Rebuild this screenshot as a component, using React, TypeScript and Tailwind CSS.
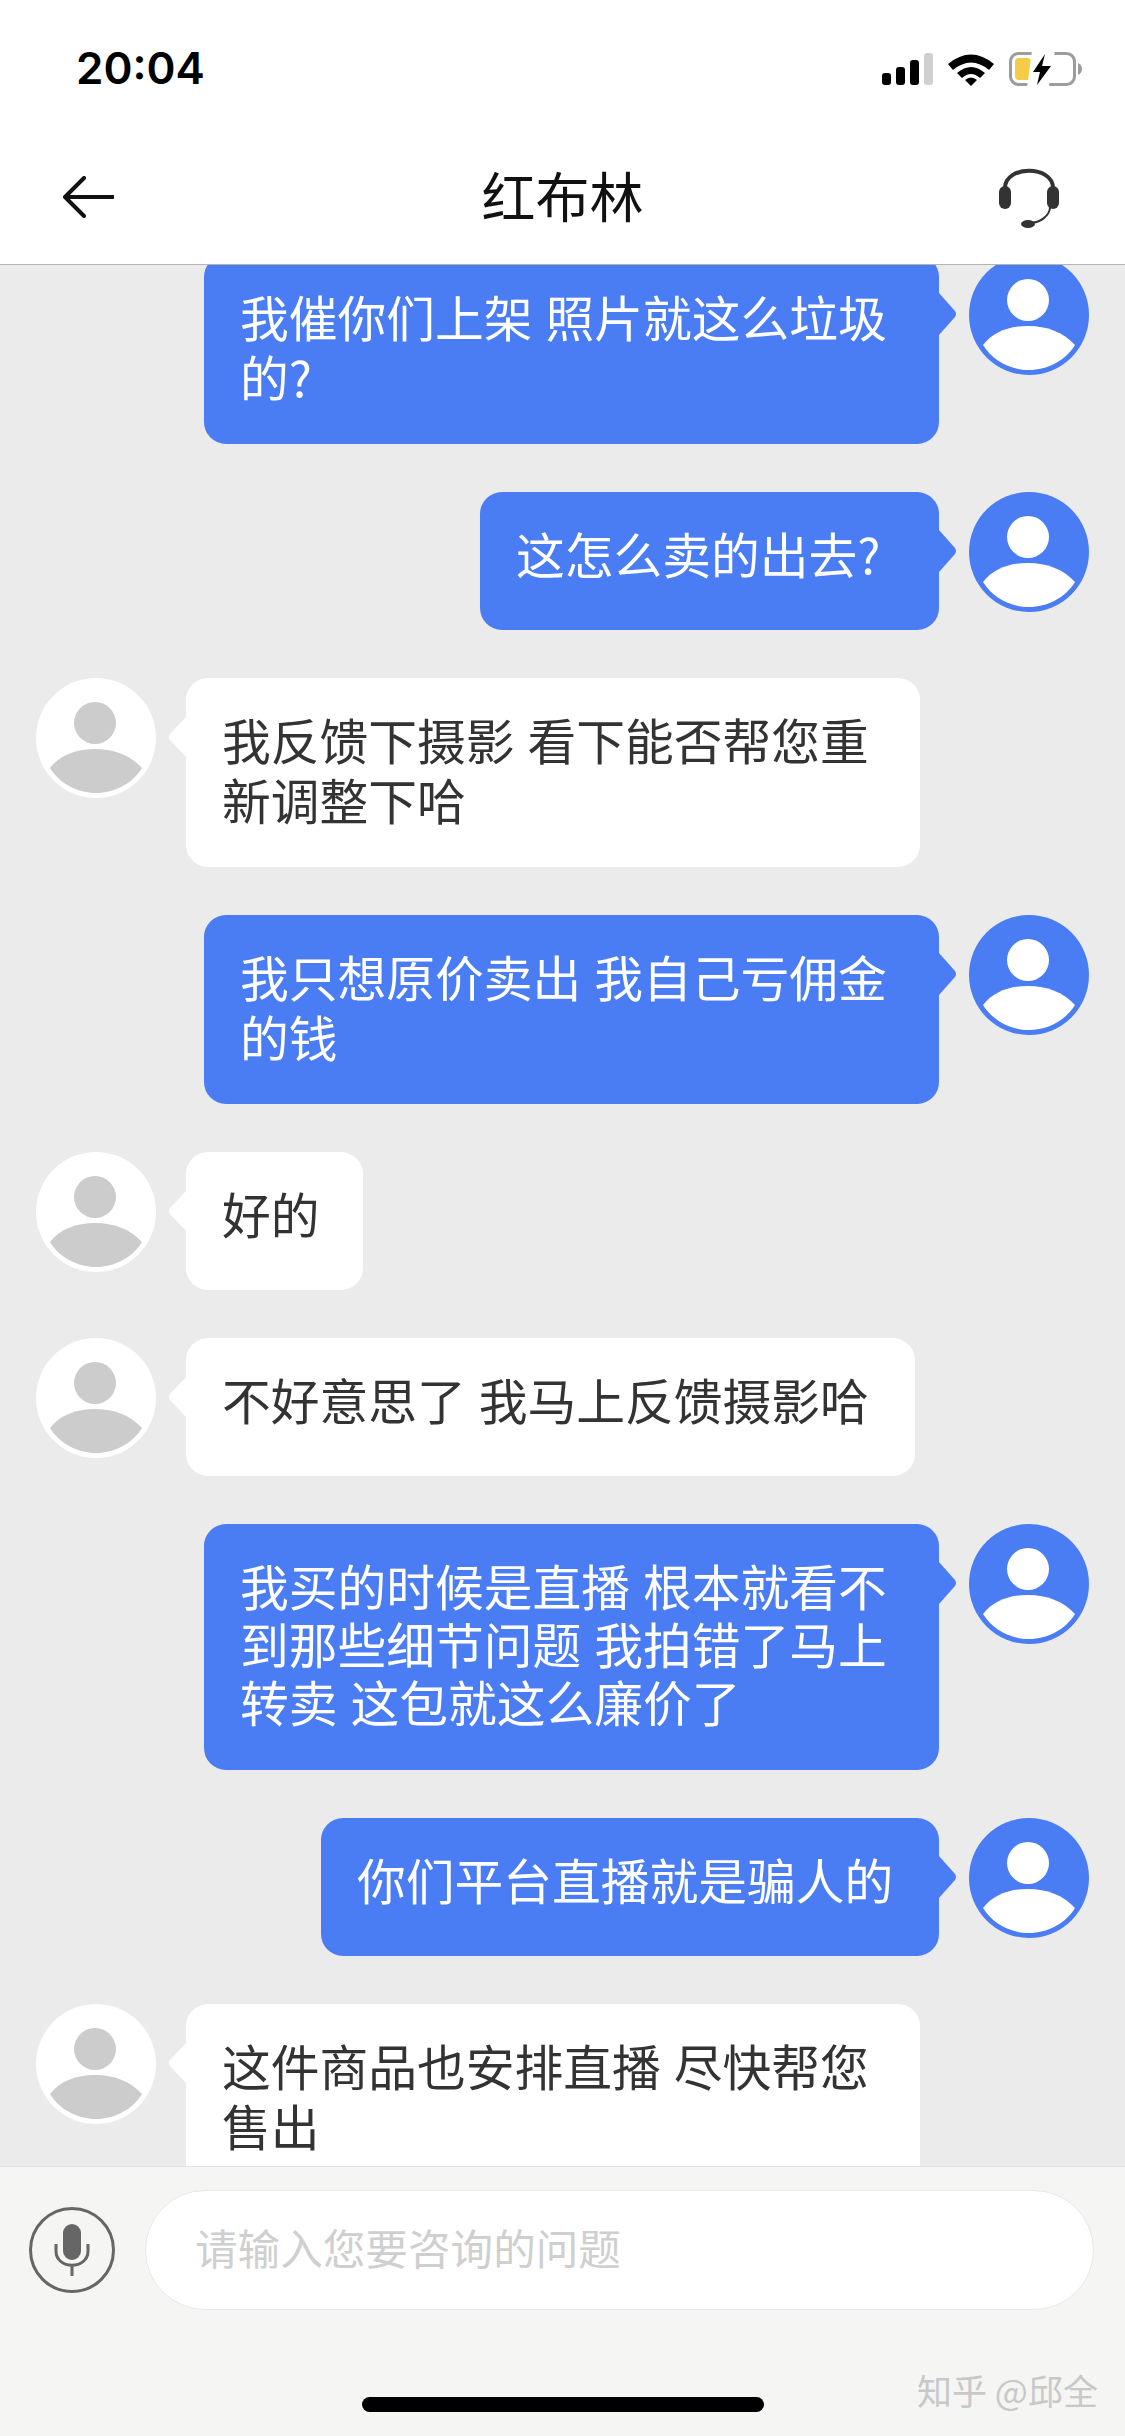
import React from "react";

type Msg = { side: "me" | "cs"; lines: string[]; size: string };

const messages: Msg[] = [
  { side: "me", lines: ["我催你们上架 照片就这么垃圾", "的?"], size: "w-[735px] h-[189px]" },
  { side: "me", lines: ["这怎么卖的出去?"], size: "w-[459px] h-[138px]" },
  { side: "cs", lines: ["我反馈下摄影 看下能否帮您重", "新调整下哈"], size: "w-[734px] h-[189px]" },
  { side: "me", lines: ["我只想原价卖出 我自己亏佣金", "的钱"], size: "w-[735px] h-[189px]" },
  { side: "cs", lines: ["好的"], size: "w-[177px] h-[138px]" },
  { side: "cs", lines: ["不好意思了 我马上反馈摄影哈"], size: "w-[729px] h-[138px]" },
  {
    side: "me",
    lines: ["我买的时候是直播 根本就看不", "到那些细节问题 我拍错了马上", "转卖 这包就这么廉价了"],
    size: "w-[735px] h-[246px]",
  },
  { side: "me", lines: ["你们平台直播就是骗人的"], size: "w-[618px] h-[138px]" },
  { side: "cs", lines: ["这件商品也安排直播 尽快帮您", "售出"], size: "w-[734px] h-[189px]" },
];

const Avatar = ({ me }: { me: boolean }) => (
  <svg viewBox="0 0 120 120" className="w-[120px] h-[120px] shrink-0">
    <circle cx="60" cy="60" r="60" fill={me ? "#4a7cf3" : "#ffffff"} />
    <circle cx="59" cy="45" r="21" fill={me ? "#ffffff" : "#cccccc"} />
    <path
      d="M14 90 C24 77 40 71 59 71 C78 71 94 77 106 90 C96 106 78 115 60 115 C42 115 24 106 14 90 Z"
      fill={me ? "#ffffff" : "#cccccc"}
    />
  </svg>
);

const Bubble = ({ m }: { m: Msg }) => {
  const me = m.side === "me";
  const three = m.lines.length === 3;
  return (
    <div
      className={`relative shrink-0 pl-[36px] rounded-[22px] ${m.size} ${
        three ? "pt-[32px] leading-[58px]" : "pt-[31px] leading-[60px]"
      } ${me ? "bg-[#4a7cf3] text-white" : "bg-white text-[#333333]"}`}
    >
      {m.lines.map((l) => (
        <div key={l} className="whitespace-pre [word-spacing:2px]">
          {l}
        </div>
      ))}
      {me ? (
        <svg viewBox="0 0 18 42" className="absolute top-[38px] left-full w-[18px] h-[42px]">
          <path d="M0 0 L16 18 Q18 21 16 24 L0 42 Z" fill="#4a7cf3" />
        </svg>
      ) : (
        <svg viewBox="0 0 18 40" className="absolute top-[39px] right-full w-[18px] h-[40px]">
          <path d="M18 0 L2 17 Q0 20 2 23 L18 40 Z" fill="#ffffff" />
        </svg>
      )}
    </div>
  );
};

export default function App() {
  return (
    <div className="relative w-[1125px] h-[2436px] flex flex-col overflow-hidden bg-white font-['Noto_Sans_CJK_SC',sans-serif]">
      {/* status bar */}
      <div className="h-[134px] shrink-0 flex items-start justify-between pt-[42px] pl-[76px] pr-[42px]">
        <span className="font-['Inter',sans-serif] font-semibold text-[44px] leading-[53px] text-black">20:04</span>
        <div className="flex items-start gap-[15px] pt-[10px]">
          <svg viewBox="0 0 52 33" className="w-[52px] h-[33px]">
            <rect x="1" y="21" width="9" height="12" rx="3" fill="#000" />
            <rect x="15" y="15" width="9" height="18" rx="3" fill="#000" />
            <rect x="29" y="8" width="9" height="25" rx="3" fill="#000" />
            <rect x="43" y="1" width="9" height="32" rx="3" fill="#d0d0d0" />
          </svg>
          <svg viewBox="0 0 46 34" className="w-[46px] h-[34px]">
            <path d="M0 12 Q23 -7 46 12 L41 18 Q23 3 5 18 Z" fill="#000" />
            <path d="M9 21 Q23 9 37 21 L32 26 Q23 18 14 26 Z" fill="#000" />
            <path d="M17 28 Q23 23 29 28 L23 34 Z" fill="#000" />
          </svg>
          <svg viewBox="0 0 74 34" className="w-[74px] h-[34px]">
            <rect x="1.5" y="1.5" width="64" height="31" rx="8" fill="none" stroke="#9c9c9c" strokeWidth="3" />
            <rect x="6" y="6" width="16" height="22" rx="4" fill="#f6cb46" />
            <path d="M69 11 Q73 13 73 17 Q73 21 69 23 Z" fill="#9c9c9c" />
            <path d="M23 -2 L46 -2 L40 34 L18 36 Z" fill="#ffffff" />
            <path d="M36 2 L24 20 L31 20 L28 33 L42 14 L33 14 Z" fill="#000" />
          </svg>
        </div>
      </div>

      {/* nav */}
      <div className="h-[131px] shrink-0 relative flex items-center justify-center border-b border-[#b4b4b4]">
        <svg viewBox="0 0 52 42" className="absolute left-[62px] top-[42px] w-[52px] h-[42px]">
          <path d="M22 2 L3 21 L22 40 M3 21 H51" fill="none" stroke="#111" strokeWidth="4" strokeLinecap="round" strokeLinejoin="round" />
        </svg>
        <span className="text-[54px] leading-[64px] text-[#111] -mt-[8px]">红布林</span>
        <svg viewBox="0 0 60 60" className="absolute left-[999px] top-[34px] w-[60px] h-[60px]">
          <path d="M6 20 C6 -3 54 -3 54 20" fill="none" stroke="#333" strokeWidth="4" />
          <rect x="0" y="18" width="12" height="23" rx="6" fill="#333" />
          <rect x="48" y="18" width="12" height="23" rx="6" fill="#333" />
          <path d="M51 40 C50 48 42 54 32 55" fill="none" stroke="#333" strokeWidth="2" />
          <ellipse cx="29" cy="56" rx="7" ry="4" fill="#333" />
        </svg>
      </div>

      {/* chat */}
      <div className="flex-1 min-h-0 overflow-hidden bg-[#ebebeb]">
        <div className="-mt-[10px] flex flex-col gap-[48px] pl-[36px] pr-[36px] text-[48.75px]">
          {messages.map((m) =>
            m.side === "me" ? (
              <div key={m.lines[0]} className="flex justify-end items-start gap-[30px]">
                <Bubble m={m} />
                <Avatar me />
              </div>
            ) : (
              <div key={m.lines[0]} className="flex items-start gap-[30px]">
                <Avatar me={false} />
                <Bubble m={m} />
              </div>
            ),
          )}
        </div>
      </div>

      {/* input */}
      <div className="h-[270px] shrink-0 bg-[#f5f5f3] border-t border-[#e2e2e2] pt-[23px] pl-[29px] pr-[31px]">
        <div className="flex items-center gap-[30px]">
          <div className="w-[86px] h-[86px] rounded-full border-[3px] border-[#666] flex items-center justify-center shrink-0">
            <svg viewBox="0 0 36 52" className="w-[36px] h-[52px]">
              <rect x="9" y="0" width="18" height="36" rx="9" fill="#666" />
              <path d="M2 20 V27 C2 46 34 46 34 27 V20 M18 41 V52" fill="none" stroke="#666" strokeWidth="3" />
            </svg>
          </div>
          <div className="flex-1 h-[120px] rounded-full bg-white border border-[#e8e8e8] flex items-center pl-[49px] pb-[6px] text-[42.6px] text-[#cfcfcf]">
            请输入您要咨询的问题
          </div>
        </div>
      </div>

      {/* home indicator + watermark */}
      <div className="absolute left-[362px] top-[2397px] w-[402px] h-[15px] rounded-full bg-black" />
      <div className="absolute left-[917px] top-[2368px] text-[35px] leading-[44px] text-[#c8c8c8] whitespace-pre">知乎 @邱全</div>
    </div>
  );
}
